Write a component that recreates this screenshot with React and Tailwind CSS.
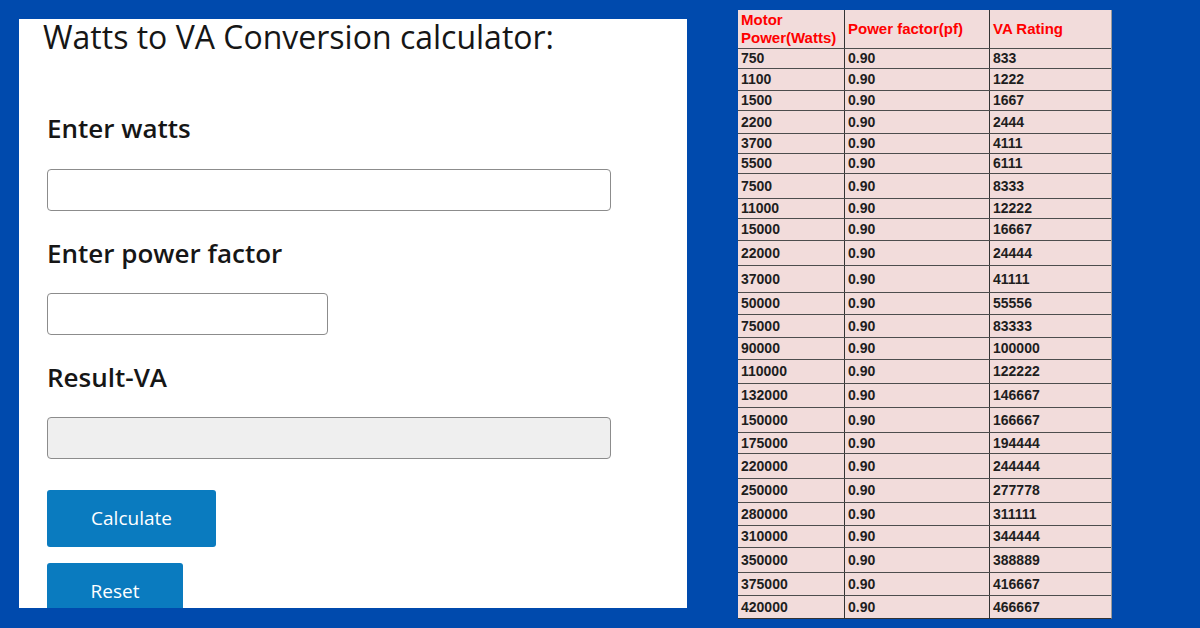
import React from 'react';

const rows = [
    ['750', '833', 'h-[20px]'],
    ['1100', '1222', 'h-[22px]'],
    ['1500', '1667', 'h-[20px]'],
    ['2200', '2444', 'h-[23px]'],
    ['3700', '4111', 'h-[20px]'],
    ['5500', '6111', 'h-[20px]'],
    ['7500', '8333', 'h-[25px]'],
    ['11000', '12222', 'h-[20px]'],
    ['15000', '16667', 'h-[22px]'],
    ['22000', '24444', 'h-[25px]'],
    ['37000', '41111', 'h-[27px]'],
    ['50000', '55556', 'h-[22px]'],
    ['75000', '83333', 'h-[23px]'],
    ['90000', '100000', 'h-[22px]'],
    ['110000', '122222', 'h-[24px]'],
    ['132000', '146667', 'h-[24px]'],
    ['150000', '166667', 'h-[25px]'],
    ['175000', '194444', 'h-[21px]'],
    ['220000', '244444', 'h-[25px]'],
    ['250000', '277778', 'h-[24px]'],
    ['280000', '311111', 'h-[23px]'],
    ['310000', '344444', 'h-[22px]'],
    ['350000', '388889', 'h-[25px]'],
    ['375000', '416667', 'h-[23px]'],
    ['420000', '466667', 'h-[23px]'],
];

function Calculator() {
    return (
        <div className="ml-[19px] mt-[19px] w-[668px] h-[589px] shrink-0 flex flex-col bg-white pl-[24px] text-[#161616] font-['Open_Sans',sans-serif]">
            <h1 className="mt-[1px] text-[32px] leading-[34px] font-normal whitespace-nowrap">Watts to VA Conversion calculator:</h1>
            {/* form part clips the Reset button at the panel's bottom edge */}
            <div className="flex-1 min-h-0 overflow-hidden pl-[4px] pt-[12px]">
                <label className="block mt-[49px] text-[26px] leading-[26px] font-semibold">Enter watts</label>
                <input type="text" className="block mt-[28px] w-[564px] h-[42px] bg-white border border-[#8c8c8c] rounded-[4px]" />

                <label className="block mt-[29px] text-[26px] leading-[26px] font-semibold">Enter power factor</label>
                <input type="text" className="block mt-[27px] w-[281px] h-[42px] bg-white border border-[#8c8c8c] rounded-[4px]" />

                <label className="block mt-[29px] text-[26px] leading-[26px] font-semibold">Result-VA</label>
                <input type="text" readOnly className="block mt-[27px] w-[564px] h-[42px] bg-[#efefef] border border-[#8c8c8c] rounded-[4px]" />

                <button className="block mt-[31px] w-[169px] h-[57px] bg-[#0a7bbf] rounded-[3px] text-white text-[19px]">Calculate</button>
                <button className="block mt-[16px] w-[136px] h-[57px] bg-[#0a7bbf] rounded-[3px] text-white text-[19px]">Reset</button>
            </div>
        </div>
    );
}

function VaTable() {
    return (
        <div className="ml-[51px] mt-[10px] w-[374px] shrink-0 bg-[#f2dcdb] font-['Liberation_Sans',Arial,sans-serif] font-bold border-r border-b border-r-[#9a9a9a] border-b-[#333]">
            <div className="flex h-[38px] text-[15px] leading-[18px] text-[#ff0000]">
                <div className="w-[107px] pl-[3px] flex items-center border-r border-[#333]">Motor Power(Watts)</div>
                <div className="w-[145px] pl-[3px] flex items-center border-r border-[#333]">Power factor(pf)</div>
                <div className="flex-1 pl-[3px] flex items-center">VA Rating</div>
            </div>
            {rows.map(([watts, va, h]) => (
                <div key={watts} className={`flex ${h} border-t border-[#4d4d4d] text-[14px] text-[#1e1e1e]`}>
                    <div className="w-[107px] pl-[3px] flex items-center border-r border-[#333]">{watts}</div>
                    <div className="w-[145px] pl-[3px] flex items-center border-r border-[#333]">0.90</div>
                    <div className="flex-1 pl-[3px] flex items-center">{va}</div>
                </div>
            ))}
        </div>
    );
}

export default function App() {
    return (
        <div className="w-[1200px] h-[628px] bg-[#004aad] flex items-start overflow-hidden">
            <Calculator />
            <VaTable />
        </div>
    );
}
